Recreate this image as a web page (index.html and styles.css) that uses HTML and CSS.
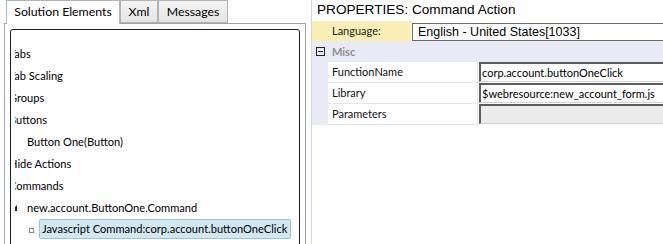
FILE: index.html
```html
<!DOCTYPE html>
<html>
<head>
<meta charset="utf-8">
<link rel="stylesheet" href="styles.css">
</head>
<body>
<div class="app">
  <div class="left">
    <div class="tabs">
      <div class="tab active tab-sol">Solution Elements</div>
      <div class="tab tab-xml">Xml</div>
      <div class="tab tab-msg">Messages</div>
    </div>
    <div class="panel">
      <div class="treebox">
        <div class="tree">
          <div class="row l0">Tabs</div>
          <div class="row l0">Tab Scaling</div>
          <div class="row l0">Groups</div>
          <div class="row l0">Buttons</div>
          <div class="row l1">Button One(Button)</div>
          <div class="row l0">Hide Actions</div>
          <div class="row l0">Commands</div>
          <div class="row l1x"><svg class="exp" width="6" height="6" viewBox="0 0 6 6"><polygon points="6,0 6,6 0,6" fill="#262626"/></svg><span>new.account.ButtonOne.Command</span></div>
          <div class="row l2"><span class="bullet"></span><span class="sel">Javascript Command:corp.account.buttonOneClick</span></div>
        </div>
      </div>
    </div>
  </div>
  <div class="right">
    <div class="title">PROPERTIES: Command Action</div>
    <div class="grid">
      <div class="lang-row">
        <div class="lang-label">Language:</div>
        <div class="lang-input">English - United States[1033]</div>
      </div>
      <div class="cat-row">
        <svg class="minus" width="9" height="9" viewBox="0 0 9 9"><rect x="0.5" y="0.5" width="8" height="8" fill="none" stroke="#222"/><line x1="2" y1="4.5" x2="7" y2="4.5" stroke="#222"/></svg>
        <span class="cat">Misc</span>
      </div>
      <div class="prop-row">
        <div class="gutter"></div>
        <div class="pname">FunctionName</div>
        <div class="pval"><div class="vbox">corp.account.buttonOneClick</div></div>
      </div>
      <div class="prop-row">
        <div class="gutter"></div>
        <div class="pname">Library</div>
        <div class="pval"><div class="vbox">$webresource:new_account_form.js</div></div>
      </div>
      <div class="prop-row">
        <div class="gutter"></div>
        <div class="pname">Parameters</div>
        <div class="pval"><div class="vbox empty"></div></div>
      </div>
    </div>
  </div>
</div>
</body>
</html>
```

FILE: styles.css
```css
html, body {
  margin: 0;
  width: 663px;
  height: 244px;
  overflow: hidden;
  background: #fff;
}
body {
  font-family: Lato, "Open Sans", sans-serif;
  font-size: 11px;
  color: #000;
}
.app {
  display: flex;
  height: 244px;
}
.left {
  width: 311px;
  flex: none;
  box-sizing: border-box;
  padding: 0 5px 0 4px;
  display: flex;
  flex-direction: column;
}
.tabs {
  display: flex;
  height: 23px;
  margin-left: 2px;
  position: relative;
  z-index: 1;
}
.tab {
  box-sizing: border-box;
  height: 23px;
  border: 1px solid #b3b3b3;
  background: linear-gradient(#f4f4f4, #e4e4e4);
  text-align: center;
  line-height: 22px;
  font-size: 12.3px;
  white-space: nowrap;
}
.tab.active {
  height: 24px;
  border-bottom: none;
  background: #fff;
}
.tab-sol { width: 114px; }
.tab-xml { width: 38px; }
.tab-msg { width: 70px; }
.panel {
  flex: 1;
  border: 1px solid #9ba6b3;
  border-bottom: none;
  padding: 5px 5px 0;
  box-sizing: border-box;
  min-height: 0;
}
.treebox {
  border: 1px solid #1e1e1e;
  border-radius: 3px;
  height: 220px;
  box-sizing: border-box;
  overflow: hidden;
}
.tree {
  margin-left: 4px;
  padding-top: 13px;
  overflow: hidden;
  font-size: 11.1px;
}
.row {
  height: 22px;
  line-height: 22px;
  white-space: nowrap;
  display: flex;
  align-items: center;
}
.l0 { margin-left: -6px; }
.l1 { padding-left: 12px; }
.l1x .exp {
  margin-left: -4px;
  margin-right: 10px;
  flex: none;
}
.l2 { padding-left: 14px; }
.bullet {
  width: 3px;
  height: 3px;
  border: 1px solid #8a8a8a;
  margin-right: 5px;
  flex: none;
}
.sel {
  box-sizing: border-box;
  height: 20px;
  line-height: 18px;
  padding: 0 3px 0 2px;
  margin-top: -3px;
  background: #d2e8f1;
  border: 1px solid #97c4d6;
  border-radius: 2px;
}
.right {
  flex: 1;
  min-width: 0;
  overflow: hidden;
  border-left: 1px solid #d6d6d6;
}
.title {
  height: 21px;
  line-height: 20px;
  padding-left: 5px;
  font-family: "Liberation Sans", Arial, sans-serif;
  font-size: 13.6px;
  white-space: nowrap;
}
.grid {
  width: 420px;
}
.lang-row {
  display: flex;
  height: 20px;
}
.lang-label {
  width: 99px;
  flex: none;
  background: #fcefb5;
  padding-left: 20px;
  box-sizing: border-box;
  line-height: 20px;
  color: #222;
}
.lang-input {
  flex: 1;
  box-sizing: border-box;
  margin: 2px 0 1px 1px;
  height: 18px;
  border: 1px solid #6c6c6c;
  padding-left: 5px;
  line-height: 16px;
  font-family: "Liberation Sans", Arial, sans-serif;
  font-size: 12.5px;
  white-space: nowrap;
}
.cat-row {
  display: flex;
  align-items: center;
  height: 21px;
  background: #e8eaf6;
}
.minus {
  margin-left: 4px;
  flex: none;
}
.cat {
  margin-left: 7px;
  font-weight: bold;
  color: #8e8e8e;
}
.prop-row {
  display: flex;
  height: 21px;
}
.gutter {
  width: 16px;
  flex: none;
  background: #e8eaf6;
}
.pname {
  width: 150px;
  flex: none;
  box-sizing: border-box;
  padding-left: 4px;
  line-height: 20px;
  border-bottom: 1px solid #e3e5f2;
  border-right: 1px solid #e3e5f2;
  color: #111;
}
.pval {
  flex: 1;
  padding-left: 1px;
}
.vbox {
  box-sizing: border-box;
  height: 20px;
  border-top: 2px solid #5c5c5c;
  border-left: 2px solid #5c5c5c;
  border-bottom: 1px solid #d2d2d2;
  padding-left: 1px;
  line-height: 17px;
  white-space: nowrap;
}
.vbox.empty {
  background: #ececec;
}
```
